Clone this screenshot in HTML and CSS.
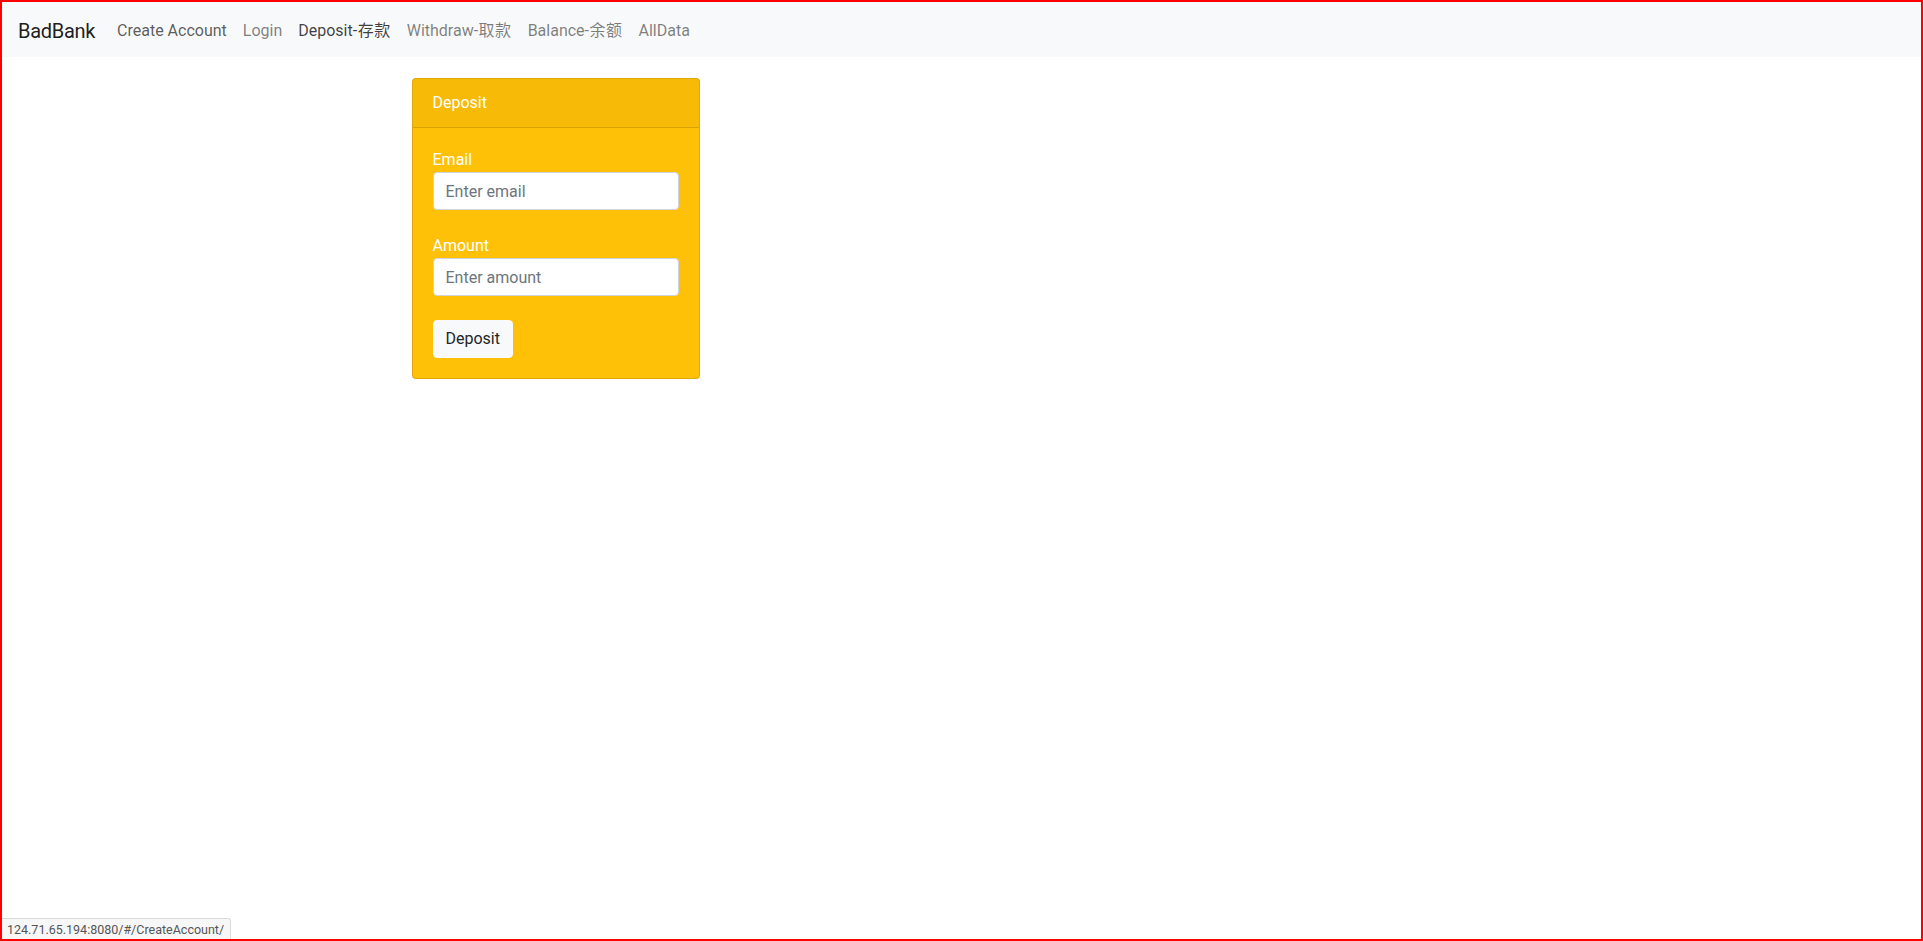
FILE: index.html
```html
<!DOCTYPE html>
<html lang="en">
<head>
  <meta charset="UTF-8">
  <meta name="viewport" content="width=device-width, initial-scale=1.0">
  <title>BadBank</title>
  <link rel="stylesheet" href="styles.css">
</head>
<body>
  <nav class="navbar">
    <a class="navbar-brand" href="#">BadBank</a>
    <ul class="navbar-nav">
      <li><a class="nav-link hover" href="#/CreateAccount/">Create Account</a></li>
      <li><a class="nav-link" href="#/login/">Login</a></li>
      <li><a class="nav-link active" href="#/deposit/">Deposit-<span class="zh">存款</span></a></li>
      <li><a class="nav-link" href="#/withdraw/">Withdraw-<span class="zh">取款</span></a></li>
      <li><a class="nav-link" href="#/balance/">Balance-<span class="zh">余额</span></a></li>
      <li><a class="nav-link" href="#/alldata/">AllData</a></li>
    </ul>
  </nav>

  <div class="container">
    <div class="card">
      <div class="card-header">Deposit</div>
      <div class="card-body">
        Email<br>
        <input type="input" class="form-control" id="email" placeholder="Enter email"><br>
        Amount<br>
        <input type="input" class="form-control" id="amount" placeholder="Enter amount"><br>
        <button type="submit" class="btn btn-light">Deposit</button>
      </div>
    </div>
  </div>

  <!-- browser status bubble + screenshot frame -->
  <div class="status-bubble">124.71.65.194:8080/#/CreateAccount/</div>
  <div class="frame"></div>
</body>
</html>
```

FILE: styles.css
```css
* {
  margin: 0;
  padding: 0;
  box-sizing: border-box;
}

body {
  font-family: Roboto, "Noto Sans CJK SC", "Liberation Sans", sans-serif;
  font-size: 16px;
  line-height: 1.5;
  color: #212529;
  background: #fff;
  padding: 1px 0 0 2px;
  min-height: 100vh;
}

a {
  text-decoration: none;
}

.navbar {
  display: flex;
  align-items: center;
  background: #f8f9fa;
  padding: 10px 16px 6px 16px;
  height: 56px;
}

.navbar-brand {
  font-size: 20px;
  line-height: 30px;
  padding: 5px 0;
  margin-right: 16px;
  letter-spacing: -0.3px;
  color: rgba(0, 0, 0, 0.9);
}

.navbar-nav {
  display: flex;
  list-style: none;
  margin-left: -2px;
}

.nav-link {
  display: block;
  padding: 8px;
  color: rgba(0, 0, 0, 0.5);
}

.nav-link .zh {
  letter-spacing: 0.5px;
  margin-left: 0.5px;
}

.nav-link.hover {
  color: rgba(0, 0, 0, 0.65);
}

.nav-link.active {
  color: rgba(0, 0, 0, 0.75);
}

.container {
  max-width: 1102px;
  margin: 0 auto;
  padding-top: 21px;
}

.card {
  width: 288px;
  background: #ffc107;
  color: #fff;
  border: 1px solid rgba(0, 0, 0, 0.125);
  border-radius: 4px;
}

.card-header {
  padding: 12px 20px;
  background: rgba(0, 0, 0, 0.03);
  border-bottom: 1px solid rgba(0, 0, 0, 0.125);
}

.card-body {
  padding: 20px;
}

.form-control {
  display: block;
  width: 100%;
  height: 38px;
  padding: 6px 12px;
  font: inherit;
  color: #495057;
  background: #fff;
  border: 1px solid #ced4da;
  border-radius: 4px;
}

.form-control::placeholder {
  color: #6c757d;
}

.btn {
  display: inline-block;
  padding: 6px 12px;
  font: inherit;
  line-height: 1.5;
  border: 1px solid transparent;
  border-radius: 4px;
  cursor: pointer;
}

.btn-light {
  background: #f8f9fa;
  border-color: #f8f9fa;
  color: #212529;
}

.status-bubble {
  position: fixed;
  left: 2px;
  bottom: 2px;
  padding: 1px 6px 0 5px;
  font-size: 12.5px;
  line-height: 19px;
  color: #555;
  background: #f7f7f7;
  border: 1px solid #dadada;
  border-left: none;
  border-bottom: none;
  border-top-right-radius: 3px;
}

.frame {
  position: fixed;
  inset: 0;
  border: 2px solid #ff0000;
  pointer-events: none;
}
```
